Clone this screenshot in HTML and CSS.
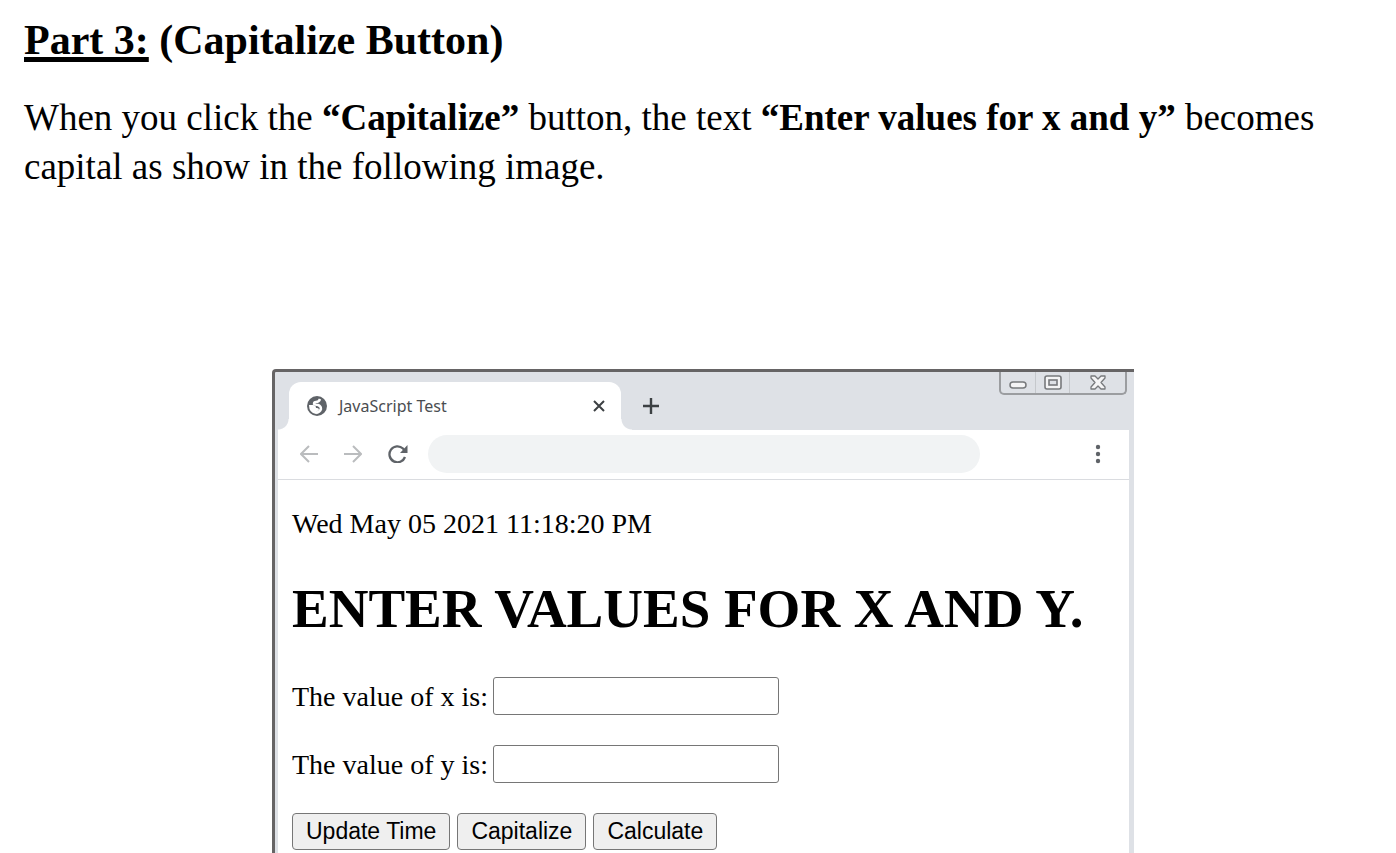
FILE: index.html
```
<!DOCTYPE html>
<html lang="en">

<head>
    <meta charset="UTF-8">
    <meta name="viewport" content="width=device-width, initial-scale=1.0">
    <title>Part 3: Capitalize Button</title>
    <link rel="stylesheet" href="styles.css">
</head>

<body>
    <h2 class="part-title"><span class="part">Part 3:</span> (Capitalize Button)</h2>
    <p class="instructions">When you click the <b>“Capitalize”</b> button, the text <b>“Enter values for x and y”</b> becomes capital as show in the following image.</p>

    <div class="window">
        <div class="titlebar">
            <div class="tab">
                <svg class="globe" viewBox="0 0 20 20" width="20" height="20">
                    <circle cx="10" cy="10" r="10" fill="#5f6368"/>
                    <path d="M2 9 H6 Q9 9 9 12 H10 Q12 12 12 14 Q12 15 10 15 L9 18 Q2 17 2 9Z" fill="#fff"/>
                    <path d="M13 3 Q12 6 9 6 Q7 6 7 8 Q8 9 11 9 Q14 10 14 13 Q13 16 9 17" stroke="#fff" stroke-width="2.4" fill="none"/>
                </svg>
                <span class="tab-name">JavaScript Test</span>
                <button class="icon-btn tab-close" aria-label="Close tab">
                    <svg viewBox="0 0 12 12" width="12" height="12"><path d="M1 1 L11 11 M11 1 L1 11" stroke="#3c4043" stroke-width="2" fill="none"/></svg>
                </button>
            </div>
            <button class="icon-btn new-tab" aria-label="New tab">
                <svg viewBox="0 0 16 16" width="16" height="16"><path d="M8 0 V16 M0 8 H16" stroke="#3c4043" stroke-width="2.4" fill="none"/></svg>
            </button>
            <div class="window-controls">
                <button class="icon-btn minimize" aria-label="Minimize">
                    <svg viewBox="0 0 18 8" width="18" height="8"><rect x="1" y="1" width="16" height="6" rx="3" fill="#f4f4f5" stroke="#77797c" stroke-width="1.5"/></svg>
                </button>
                <button class="icon-btn" aria-label="Maximize">
                    <svg viewBox="0 0 18 15" width="18" height="15"><rect x="1" y="1" width="16" height="13" rx="2" fill="#f4f4f5" stroke="#77797c" stroke-width="1.6"/><rect x="5" y="5" width="8" height="5" fill="#dee1e6" stroke="#77797c" stroke-width="1.6"/></svg>
                </button>
                <button class="icon-btn" aria-label="Close">
                    <svg viewBox="0 0 16 15" width="16" height="15"><path d="M1 1 H5 L8 4 L11 1 H15 V3 L11 7.5 L15 12 V14 H11 L8 11 L5 14 H1 V12 L5 7.5 L1 3Z" fill="#f4f4f5" stroke="#77797c" stroke-width="1.3" stroke-linejoin="round"/></svg>
                </button>
            </div>
        </div>

        <div class="toolbar">
            <button class="icon-btn" aria-label="Back">
                <svg viewBox="0 0 18 18" width="18" height="18"><path d="M18 9 H1 M9 1 L1 9 L9 17" stroke="#babcbe" stroke-width="2" fill="none"/></svg>
            </button>
            <button class="icon-btn" aria-label="Forward">
                <svg viewBox="0 0 18 18" width="18" height="18"><path d="M0 9 H17 M9 1 L17 9 L9 17" stroke="#babcbe" stroke-width="2" fill="none"/></svg>
            </button>
            <button class="icon-btn" aria-label="Reload">
                <svg viewBox="0 0 20 18" width="20" height="18"><path d="M17 12 A8 8 0 1 1 15 3.500 L17 6" stroke="#5f6368" stroke-width="2.3" fill="none"/><path d="M19.500 0 V8 H12Z" fill="#5f6368"/></svg>
            </button>
            <input type="text" class="address" aria-label="Address">
            <button class="icon-btn menu" aria-label="Menu">
                <svg viewBox="0 0 6 20" width="6" height="20" fill="#5f6368"><circle cx="3" cy="3" r="2.2"/><circle cx="3" cy="10" r="2.2"/><circle cx="3" cy="17" r="2.2"/></svg>
            </button>
        </div>

        <div class="content">
            <p class="time" id="time">Wed May 05 2021 11:18:20 PM</p>
            <h1 id="heading">ENTER VALUES FOR X AND Y.</h1>
            <div class="field">
                <label for="x">The value of x is:</label>
                <input type="text" id="x">
            </div>
            <div class="field">
                <label for="y">The value of y is:</label>
                <input type="text" id="y">
            </div>
            <div class="buttons">
                <button>Update Time</button>
                <button>Capitalize</button>
                <button>Calculate</button>
            </div>
        </div>
    </div>
</body>
</html>
```
FILE: styles.css
```
* {
    box-sizing: border-box;
}

body {
    font-family: "Liberation Serif", "Times New Roman", serif;
    background-color: #fff;
    color: #000;
    display: flex;
    flex-direction: column;
    min-height: 100vh;
    margin: 0;
    padding: 16px 14px 0 24px;
}

.part-title {
    font-size: 42px;
    line-height: 48px;
    margin: 0 0 29px;
}

.part {
    text-decoration: underline;
    text-decoration-thickness: 5px;
    text-underline-offset: 3px;
    text-decoration-skip-ink: none;
}

.instructions {
    font-size: 37px;
    line-height: 49px;
    margin: 0 0 178px;
}

/* browser window */
.window {
    display: flex;
    flex-direction: column;
    flex: 1;
    align-self: center;
    width: 100%;
    max-width: 862px;
    border-top: 3px solid #666465;
    border-left: 3px solid #666465;
    border-top-left-radius: 4px;
    background-color: #dee1e6;
    padding: 0 5px 0 3px;
}

.icon-btn {
    display: flex;
    align-items: center;
    justify-content: center;
    border: none;
    background: none;
    padding: 0;
}

.titlebar {
    display: flex;
    position: relative;
    padding: 10px 0 0 11px;
    height: 58px;
}

.tab {
    display: flex;
    align-items: center;
    position: relative;
    width: 332px;
    padding: 0 16px 0 18px;
    background-color: #fff;
    border-radius: 12px 12px 0 0;
}

/* curved feet of the tab */
.tab::before,
.tab::after {
    content: "";
    position: absolute;
    bottom: 0;
    width: 11px;
    height: 11px;
}

.tab::before {
    right: 100%;
    background: radial-gradient(circle at 0 0, #dee1e6 10px, #fff 11px);
}

.tab::after {
    left: 100%;
    background: radial-gradient(circle at 100% 0, #dee1e6 10px, #fff 11px);
}

.tab-name {
    font-family: "Noto Sans", "Open Sans", sans-serif;
    font-size: 16px;
    color: #4a4d51;
    margin-left: 12px;
}

.tab-close {
    margin-left: auto;
}

.new-tab {
    margin-left: 22px;
}

.window-controls {
    display: grid;
    grid-template-columns: 34px 34px 1fr;
    position: absolute;
    top: 0;
    right: 2px;
    width: 128px;
    height: 23px;
    border: 2px solid #9b9da0;
    border-top: none;
    border-radius: 0 0 5px 5px;
}

.window-controls .icon-btn + .icon-btn {
    border-left: 1px solid #c5c8cc;
}

.window-controls .minimize {
    padding-top: 4px;
}

.toolbar {
    display: flex;
    align-items: center;
    gap: 26px;
    height: 50px;
    padding: 0 28px 2px 22px;
    background-color: #fff;
    border-bottom: 1px solid #dadce0;
}

.address {
    width: 552px;
    height: 38px;
    margin-left: -6px;
    padding: 0 18px;
    border: none;
    border-radius: 19px;
    background-color: #f1f3f4;
}

.menu {
    margin-left: auto;
}

.content {
    flex: 1;
    background-color: #fff;
    padding: 28px 14px 3px;
    font-size: 28px;
    line-height: 31px;
}

.time {
    margin: 0;
}

h1 {
    font-size: 55px;
    line-height: 62px;
    margin: 39px 0 37px;
}

.field {
    display: flex;
    align-items: center;
    gap: 5px;
    margin-bottom: 30px;
}

.field input {
    width: 286px;
    height: 38px;
    border: 1px solid #767676;
    border-radius: 3px;
    font-size: 23px;
}

.buttons {
    display: flex;
    gap: 7px;
}

.buttons button {
    height: 37px;
    padding: 0 13px;
    border: 1px solid #767676;
    border-radius: 4px;
    background-color: #efefef;
    color: #000;
    font-family: "Liberation Sans", Arial, sans-serif;
    font-size: 23px;
}
```
